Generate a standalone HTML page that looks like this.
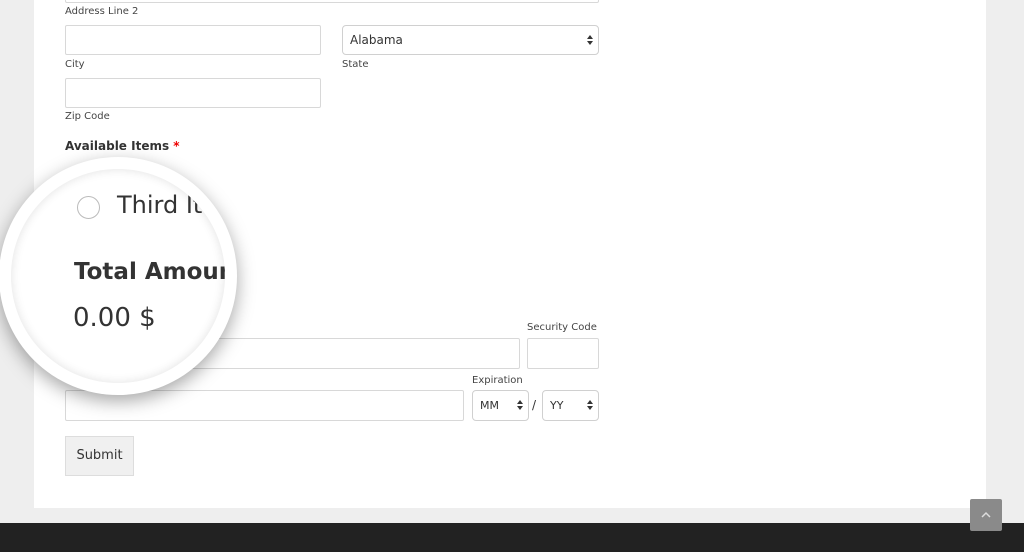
<!DOCTYPE html>
<html><head><style>
*{box-sizing:border-box;margin:0;padding:0}
body{width:1024px;height:552px;background:#eeeeee;position:relative;overflow:hidden;font-family:"DejaVu Sans","Liberation Sans",sans-serif;color:#333}
.panel{position:absolute;left:34px;top:0;width:952px;height:508px;background:#fff}
.in{position:absolute;border:1px solid #d8d8d8;border-radius:2px;background:#fff}
.sel{position:absolute;border:1px solid #d0d0d0;border-radius:4px;background:#fff;font-size:12px;padding-left:7px;line-height:28px;color:#333}
.sel:after{content:"";position:absolute;right:5px;top:9px;border-left:3px solid transparent;border-right:3px solid transparent;border-bottom:4px solid #333}
.sel:before{content:"";position:absolute;right:5px;top:15px;border-left:3px solid transparent;border-right:3px solid transparent;border-top:4px solid #333}
.lb{position:absolute;font-size:10px;color:#444}
.foot{position:absolute;left:0;top:523px;width:1024px;height:29px;background:#222}
.top{position:absolute;left:970px;top:499px;width:32px;height:32px;background:#8a8a8a;border-radius:2px}
.mag{position:absolute;left:-1px;top:157px;width:238px;height:238px;border-radius:50%;background:#fff;box-shadow:0 6px 18px rgba(0,0,0,.35)}
.inner{position:absolute;left:12px;top:12px;width:214px;height:214px;border-radius:50%;overflow:hidden;background:#fff;box-shadow:inset 0 0 10px rgba(0,0,0,.12)}
</style></head><body>
<div class="panel"></div>
<div class="in" style="left:65px;top:-20px;width:534px;height:23px"></div>
<div class="lb" style="left:65px;top:6px">Address Line 2</div>
<div class="in" style="left:65px;top:25px;width:256px;height:30px"></div>
<div class="sel" style="left:342px;top:25px;width:257px;height:30px">Alabama</div>
<div class="lb" style="left:65px;top:59px">City</div>
<div class="lb" style="left:342px;top:59px">State</div>
<div class="in" style="left:65px;top:78px;width:256px;height:30px"></div>
<div class="lb" style="left:65px;top:111px">Zip Code</div>
<div style="position:absolute;left:65px;top:139px;font-size:12px;font-weight:bold;color:#333">Available Items <span style="color:#e00">*</span></div>
<div class="lb" style="left:527px;top:322px">Security Code</div>
<div class="in" style="left:65px;top:338px;width:455px;height:31px"></div>
<div class="in" style="left:527px;top:338px;width:72px;height:31px"></div>
<div class="lb" style="left:472px;top:375px">Expiration</div>
<div class="in" style="left:65px;top:390px;width:399px;height:31px"></div>
<div class="sel" style="left:472px;top:390px;width:57px;height:31px;font-size:11px;line-height:29px">MM</div>
<div style="position:absolute;left:532px;top:398px;font-size:12px">/</div>
<div class="sel" style="left:542px;top:390px;width:57px;height:31px;font-size:11px;line-height:29px">YY</div>
<div style="position:absolute;left:65px;top:436px;width:69px;height:40px;background:#f0f0f0;border:1px solid #ddd;font-size:13px;line-height:38px;text-align:center;color:#333">Submit</div>
<div class="foot"></div>
<div class="top"><svg width="32" height="32"><path d="M12 18l4-4 4 4" stroke="#ddd" stroke-width="1.5" fill="none"/></svg></div>
<div class="mag"><div class="inner">
<div style="position:absolute;left:66px;top:27px;width:23px;height:23px;border:1.5px solid #bbb;border-radius:50%"></div>
<div style="position:absolute;left:106px;top:22px;font-size:24px;white-space:nowrap;color:#333">Third Item</div>
<div style="position:absolute;left:63px;top:90px;font-size:23px;font-weight:bold;white-space:nowrap;color:#333">Total Amount</div>
<div style="position:absolute;left:62px;top:134px;font-size:26px;white-space:nowrap;color:#333">0.00 $</div>
</div></div>
</body></html>
